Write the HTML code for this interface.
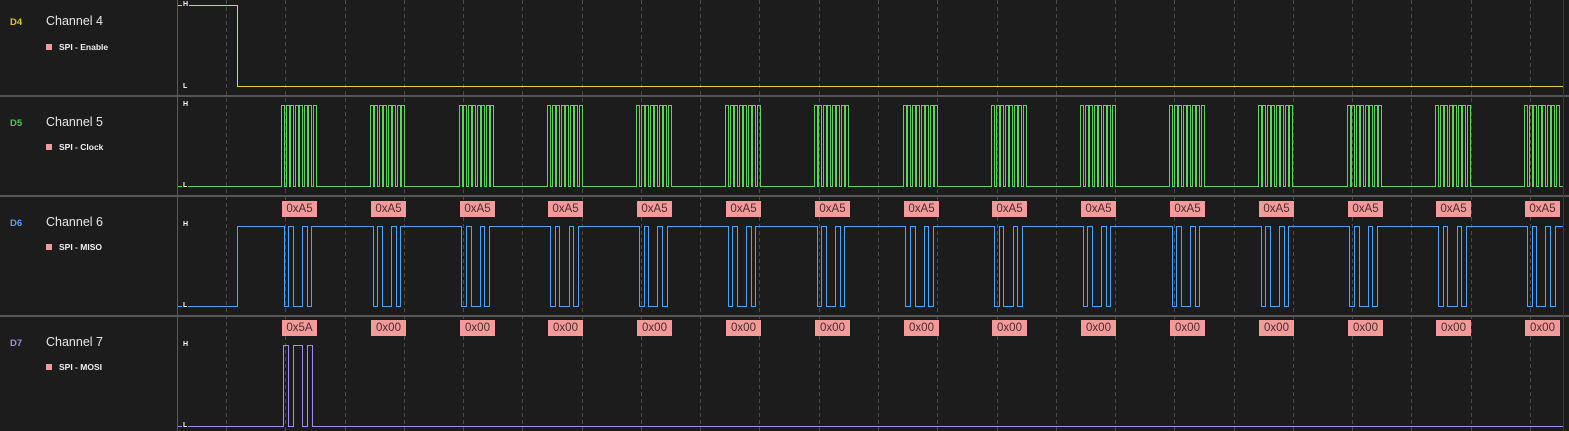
<!DOCTYPE html>
<html><head><meta charset="utf-8"><style>
html,body{margin:0;padding:0;background:#1c1c1c;width:1569px;height:431px;overflow:hidden;font-family:"Liberation Sans",sans-serif}
.t{position:absolute;color:#e6e6e6;font-size:12.5px}
.d{position:absolute;font-size:9.5px;font-weight:bold}
.s{position:absolute;color:#f0f0f0;font-size:8.5px;font-weight:bold}
.sq{position:absolute;width:6px;height:6px;background:#f39a9a}
.hl{position:absolute;color:#fff;font-size:7px;font-weight:bold;left:182px;background:#1c1c1c;padding:0 1px}
.lb{position:absolute;height:16px;width:35px;background:#f39a9a;color:#4a2c2c;font-size:11.5px;line-height:16px;text-align:center}
</style></head><body>
<svg id="sv" width="1569" height="431" style="position:absolute;left:0;top:0">
<g id="grid" stroke="#4a4a4a" stroke-dasharray="4,3" stroke-width="1"></g>
<rect x="0" y="95" width="1569" height="2" fill="#555"/>
<rect x="0" y="195" width="1569" height="2" fill="#555"/>
<rect x="0" y="315" width="1569" height="2" fill="#555"/>
<rect x="177" y="0" width="1" height="431" fill="#5a5a5a"/>
<rect x="1563" y="0" width="1" height="431" fill="#3a3a3a"/>
<path d="M178 5.5H237.5V86.5H1563" stroke="#e6d03a" fill="none" stroke-width="1"/>
<path id="clk" stroke="#5fd35f" fill="none" stroke-width="1"/>
<path id="miso" stroke="#4fa3f7" fill="none" stroke-width="1"/>
<path d="M178 426.5H283.5V345.5H288.5V426.5H293.5V345.5H302.5V426.5H307.5V345.5H312.5V426.5H1563" stroke="#a58cf0" fill="none" stroke-width="1"/>
</svg>
<div class="d" style="left:10px;top:17px;color:#d8c832">D4</div>
<div class="t" style="left:46px;top:14px">Channel 4</div>
<div class="sq" style="left:46px;top:44px"></div><div class="s" style="left:59px;top:42px">SPI - Enable</div>
<div class="d" style="left:10px;top:118px;color:#4fc94f">D5</div>
<div class="t" style="left:46px;top:115px">Channel 5</div>
<div class="sq" style="left:46px;top:144px"></div><div class="s" style="left:59px;top:142px">SPI - Clock</div>
<div class="d" style="left:10px;top:218px;color:#4fa3f7">D6</div>
<div class="t" style="left:46px;top:215px">Channel 6</div>
<div class="sq" style="left:46px;top:244px"></div><div class="s" style="left:59px;top:242px">SPI - MISO</div>
<div class="d" style="left:10px;top:338px;color:#a58cf0">D7</div>
<div class="t" style="left:46px;top:335px">Channel 7</div>
<div class="sq" style="left:46px;top:364px"></div><div class="s" style="left:59px;top:362px">SPI - MOSI</div>
<div class="hl" style="top:1px">H</div><div class="hl" style="top:83px">L</div>
<div class="hl" style="top:101px">H</div><div class="hl" style="top:182px">L</div>
<div class="hl" style="top:221px">H</div><div class="hl" style="top:302px">L</div>
<div class="hl" style="top:341px">H</div><div class="hl" style="top:422px">L</div>
<div class="lb" style="left:282px;top:201px">0xA5</div><div class="lb" style="left:371px;top:201px">0xA5</div><div class="lb" style="left:460px;top:201px">0xA5</div><div class="lb" style="left:548px;top:201px">0xA5</div><div class="lb" style="left:637px;top:201px">0xA5</div><div class="lb" style="left:726px;top:201px">0xA5</div><div class="lb" style="left:815px;top:201px">0xA5</div><div class="lb" style="left:904px;top:201px">0xA5</div><div class="lb" style="left:992px;top:201px">0xA5</div><div class="lb" style="left:1081px;top:201px">0xA5</div><div class="lb" style="left:1170px;top:201px">0xA5</div><div class="lb" style="left:1259px;top:201px">0xA5</div><div class="lb" style="left:1348px;top:201px">0xA5</div><div class="lb" style="left:1436px;top:201px">0xA5</div><div class="lb" style="left:1525px;top:201px">0xA5</div>
<div class="lb" style="left:282px;top:320px">0x5A</div><div class="lb" style="left:371px;top:320px">0x00</div><div class="lb" style="left:460px;top:320px">0x00</div><div class="lb" style="left:548px;top:320px">0x00</div><div class="lb" style="left:637px;top:320px">0x00</div><div class="lb" style="left:726px;top:320px">0x00</div><div class="lb" style="left:815px;top:320px">0x00</div><div class="lb" style="left:904px;top:320px">0x00</div><div class="lb" style="left:992px;top:320px">0x00</div><div class="lb" style="left:1081px;top:320px">0x00</div><div class="lb" style="left:1170px;top:320px">0x00</div><div class="lb" style="left:1259px;top:320px">0x00</div><div class="lb" style="left:1348px;top:320px">0x00</div><div class="lb" style="left:1436px;top:320px">0x00</div><div class="lb" style="left:1525px;top:320px">0x00</div>
<script>
var g=document.getElementById('grid'),h='';
for(var x=226;x<1562;x+=59.27){var X=Math.round(x)+0.5;h+='<line x1="'+X+'" y1="0" x2="'+X+'" y2="431"/>';}
g.innerHTML=h;
var c='M178 186.5',m='M178 306.5H237.5V226.5';
for(var k=0;k<15;k++){var s=281+88.8*k;
 for(var p=0;p<8;p++){var a=(Math.round(s+4.5*p)+0.5),b=a+3;c+='H'+a+'V105.5H'+b+'V186.5';}
 var e=function(i){return (Math.round(s+2.7+4.6*i)+0.5);};
 m+='H'+e(0)+'V306.5H'+e(1)+'V226.5H'+e(2)+'V306.5H'+e(4)+'V226.5H'+e(5)+'V306.5H'+e(6)+'V226.5';
}
c+='H1563';m+='H1563';
document.getElementById('clk').setAttribute('d',c);
document.getElementById('miso').setAttribute('d',m);
</script>
</body></html>
